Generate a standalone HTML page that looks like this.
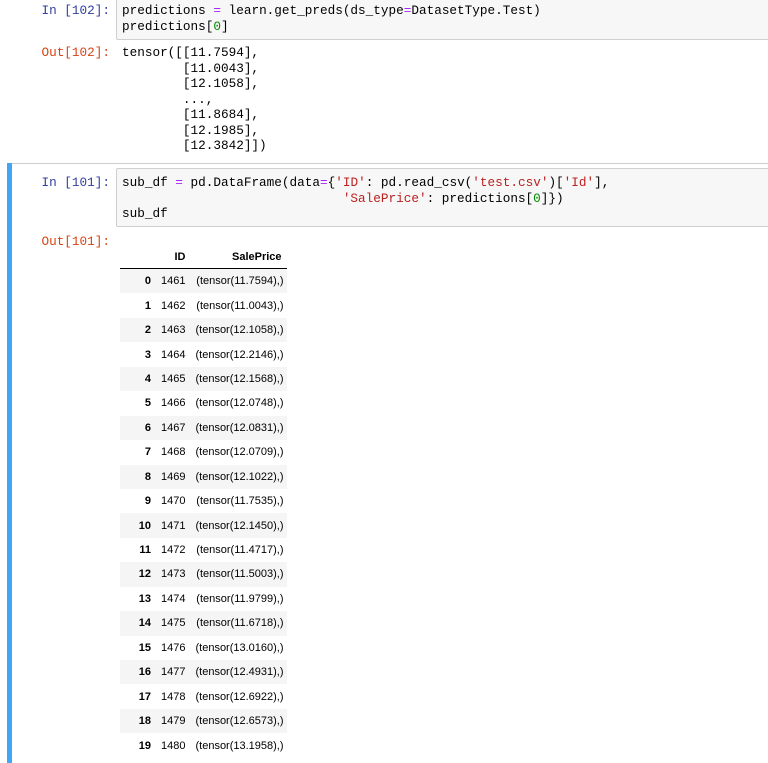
<!DOCTYPE html>
<html><head><style>
body{margin:0;width:768px;height:748px;overflow:hidden;background:#fff;font-family:"Liberation Mono",monospace;font-size:12.7px;position:relative}
.p{position:absolute;right:658px;text-align:right;white-space:pre;line-height:15.5px}
.in{color:#303F9F}.out{color:#D84315}
.box{position:absolute;left:116px;right:-2px;background:#f7f7f7;border:1px solid #cfcfcf;border-radius:2px}
pre{margin:0;font-family:inherit;font-size:inherit;line-height:15.5px;position:absolute;left:122px;color:#000}
.k{color:#AA22FF}.n{color:#008800}.s{color:#BA2121}
table{position:absolute;left:120px;top:246px;border-collapse:collapse;font-family:"Liberation Sans",sans-serif;font-size:11px}
td,th{padding:0 5px;height:24.45px;text-align:right;white-space:nowrap}
td:last-child{padding-right:3px}
th{font-weight:bold}
thead tr{border-bottom:1px solid #000}
thead th{height:22px}
tbody tr:nth-child(odd){background:#f5f5f5}
</style></head><body>
<div class="box" style="top:-2px;height:40px"></div>
<div class="p in" style="top:3px">In [102]:</div>
<pre style="top:3px">predictions <span class="k">=</span> learn.get_preds(ds_type<span class="k">=</span>DatasetType.Test)
predictions[<span class="n">0</span>]</pre>
<div class="p out" style="top:45px">Out[102]:</div>
<pre style="top:45px">tensor([[11.7594],
        [11.0043],
        [12.1058],
        ...,
        [11.8684],
        [12.1985],
        [12.3842]])</pre>
<div style="position:absolute;left:7px;top:163px;width:761px;height:1px;background:#cfcfcf"></div>
<div style="position:absolute;left:7px;top:163px;width:5px;height:600px;background:#42A5F5"></div>
<div class="box" style="top:168px;height:57px"></div>
<div class="p in" style="top:175px">In [101]:</div>
<pre style="top:175px">sub_df <span class="k">=</span> pd.DataFrame(data<span class="k">=</span>{<span class="s">'ID'</span>: pd.read_csv(<span class="s">'test.csv'</span>)[<span class="s">'Id'</span>],
                             <span class="s">'SalePrice'</span>: predictions[<span class="n">0</span>]})
sub_df</pre>
<div class="p out" style="top:234px">Out[101]:</div>
<table>
<thead><tr><th style="width:26px"></th><th>ID</th><th>SalePrice</th></tr></thead>
<tbody>
<tr><th>0</th><td>1461</td><td>(tensor(11.7594),)</td></tr>
<tr><th>1</th><td>1462</td><td>(tensor(11.0043),)</td></tr>
<tr><th>2</th><td>1463</td><td>(tensor(12.1058),)</td></tr>
<tr><th>3</th><td>1464</td><td>(tensor(12.2146),)</td></tr>
<tr><th>4</th><td>1465</td><td>(tensor(12.1568),)</td></tr>
<tr><th>5</th><td>1466</td><td>(tensor(12.0748),)</td></tr>
<tr><th>6</th><td>1467</td><td>(tensor(12.0831),)</td></tr>
<tr><th>7</th><td>1468</td><td>(tensor(12.0709),)</td></tr>
<tr><th>8</th><td>1469</td><td>(tensor(12.1022),)</td></tr>
<tr><th>9</th><td>1470</td><td>(tensor(11.7535),)</td></tr>
<tr><th>10</th><td>1471</td><td>(tensor(12.1450),)</td></tr>
<tr><th>11</th><td>1472</td><td>(tensor(11.4717),)</td></tr>
<tr><th>12</th><td>1473</td><td>(tensor(11.5003),)</td></tr>
<tr><th>13</th><td>1474</td><td>(tensor(11.9799),)</td></tr>
<tr><th>14</th><td>1475</td><td>(tensor(11.6718),)</td></tr>
<tr><th>15</th><td>1476</td><td>(tensor(13.0160),)</td></tr>
<tr><th>16</th><td>1477</td><td>(tensor(12.4931),)</td></tr>
<tr><th>17</th><td>1478</td><td>(tensor(12.6922),)</td></tr>
<tr><th>18</th><td>1479</td><td>(tensor(12.6573),)</td></tr>
<tr><th>19</th><td>1480</td><td>(tensor(13.1958),)</td></tr>
</tbody></table>
</body></html>
